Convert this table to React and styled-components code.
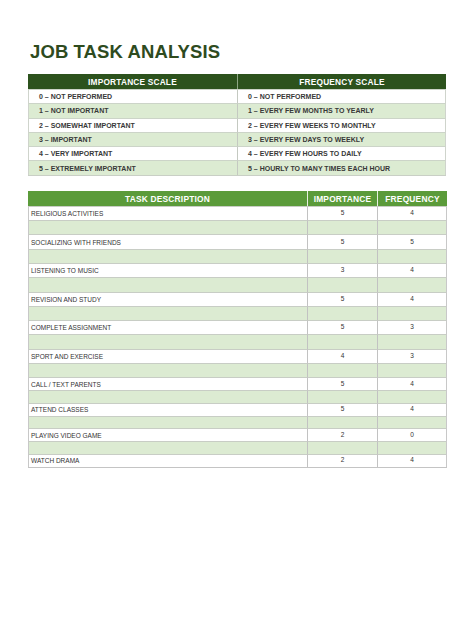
import React from 'react';
import styled, { createGlobalStyle } from 'styled-components';

const GlobalStyle = createGlobalStyle`
  html, body {
    margin: 0;
    padding: 0;
    background: #ffffff;
  }
  body {
    font-family: "Liberation Sans", Arial, sans-serif;
  }
`;

const Page = styled.div`
  width: 474px;
  height: 632px;
  padding: 42px 0 0 28px;
  box-sizing: border-box;
`;

const Title = styled.h1`
  margin: 0 0 12px 2px;
  font-size: 18.5px;
  line-height: 20px;
  font-weight: 700;
  color: #2e4b1e;
  letter-spacing: 0.1px;
`;

const ScaleTable = styled.div`
  width: 418px;
  display: grid;
  grid-template-columns: 209px 209px;
  border-bottom: 1px solid #c9cfc5;
`;

const ScaleHead = styled.div`
  height: 15px;
  background: #2c521d;
  color: #ffffff;
  font-size: 8.3px;
  font-weight: 700;
  letter-spacing: 0.2px;
  display: flex;
  align-items: center;
  justify-content: center;
  border-left: ${(p) => (p.$first ? 'none' : '1px solid #8da784')};
`;

const ScaleCell = styled.div`
  height: 14.3px;
  box-sizing: border-box;
  background: ${(p) => (p.$shade ? '#dcebd2' : '#ffffff')};
  border-top: 1px solid #ccd4c8;
  border-left: ${(p) => (p.$first ? '1px solid #cfd4cc' : '1px solid #c4c9c1')};
  border-right: ${(p) => (p.$first ? 'none' : '1px solid #cfd4cc')};
  color: #383838;
  font-size: 7px;
  font-weight: 700;
  display: flex;
  align-items: center;
  padding-left: 10px;
  white-space: nowrap;
`;

const TaskTable = styled.div`
  margin-top: 15.5px;
  width: 419px;
  display: grid;
  grid-template-columns: 279px 70px 70px;
  border-bottom: 1px solid #c4c4c4;
`;

const TaskHead = styled.div`
  height: 14.5px;
  background: #5b9b3a;
  color: #ffffff;
  font-size: 8.4px;
  font-weight: 700;
  letter-spacing: 0.2px;
  display: flex;
  align-items: center;
  justify-content: center;
  border-left: ${(p) => (p.$first ? 'none' : '1px solid #e8f0e2')};
`;

const TaskCell = styled.div`
  height: ${(p) => p.$h}px;
  box-sizing: border-box;
  background: ${(p) => (p.$shade ? '#dcebd2' : '#ffffff')};
  border-top: 1px solid #c8cdc5;
  border-left: 1px solid ${(p) => (p.$first ? '#c8c8c8' : '#c2c2c2')};
  border-right: ${(p) => (p.$last ? '1px solid #c8c8c8' : 'none')};
  color: #333333;
  font-size: 6.5px;
  display: flex;
  align-items: center;
  justify-content: ${(p) => (p.$first ? 'flex-start' : 'center')};
  padding-left: ${(p) => (p.$first ? '2px' : '0')};
  padding-bottom: ${(p) => (p.$first ? '0' : '2px')};
  white-space: nowrap;
`;

const importance = [
  '0 – NOT PERFORMED',
  '1 – NOT IMPORTANT',
  '2 – SOMEWHAT IMPORTANT',
  '3 – IMPORTANT',
  '4 – VERY IMPORTANT',
  '5 – EXTREMELY IMPORTANT',
];

const frequency = [
  '0 – NOT PERFORMED',
  '1 – EVERY FEW MONTHS TO YEARLY',
  '2 – EVERY FEW WEEKS TO MONTHLY',
  '3 – EVERY FEW DAYS TO WEEKLY',
  '4 – EVERY FEW HOURS TO DAILY',
  '5 – HOURLY TO MANY TIMES EACH HOUR',
];

const tasks = [
  ['RELIGIOUS ACTIVITIES', '5', '4'],
  ['SOCIALIZING WITH FRIENDS', '5', '5'],
  ['LISTENING TO MUSIC', '3', '4'],
  ['REVISION AND STUDY', '5', '4'],
  ['COMPLETE ASSIGNMENT', '5', '3'],
  ['SPORT AND EXERCISE', '4', '3'],
  ['CALL / TEXT PARENTS', '5', '4'],
  ['ATTEND CLASSES', '5', '4'],
  ['PLAYING VIDEO GAME', '2', '0'],
  ['WATCH DRAMA', '2', '4'],
];

// each task gets a white row, followed by an empty shaded spacer row
function buildRows() {
  const rows = [];
  tasks.forEach((t, i) => {
    rows.push({ cells: t, shade: false });
    if (i < tasks.length - 1) rows.push({ cells: ['', '', ''], shade: true });
  });
  return rows;
}

export default function App() {
  const rows = buildRows();
  return (
    <>
      <GlobalStyle />
      <Page>
        <Title>JOB TASK ANALYSIS</Title>

        <ScaleTable>
          <ScaleHead $first>IMPORTANCE SCALE</ScaleHead>
          <ScaleHead>FREQUENCY SCALE</ScaleHead>
          {importance.map((label, i) => (
            <React.Fragment key={label}>
              <ScaleCell $first $shade={i % 2 === 1}>{label}</ScaleCell>
              <ScaleCell $shade={i % 2 === 1}>{frequency[i]}</ScaleCell>
            </React.Fragment>
          ))}
        </ScaleTable>

        <TaskTable>
          <TaskHead $first>TASK DESCRIPTION</TaskHead>
          <TaskHead>IMPORTANCE</TaskHead>
          <TaskHead>FREQUENCY</TaskHead>
          {rows.map((row, r) => {
            const h = r < 12 ? 14.3 : 12.75;
            return row.cells.map((c, ci) => (
              <TaskCell
                key={`${r}-${ci}`}
                $h={h}
                $shade={row.shade}
                $first={ci === 0}
                $last={ci === 2}
              >
                {c}
              </TaskCell>
            ));
          })}
        </TaskTable>
      </Page>
    </>
  );
}
